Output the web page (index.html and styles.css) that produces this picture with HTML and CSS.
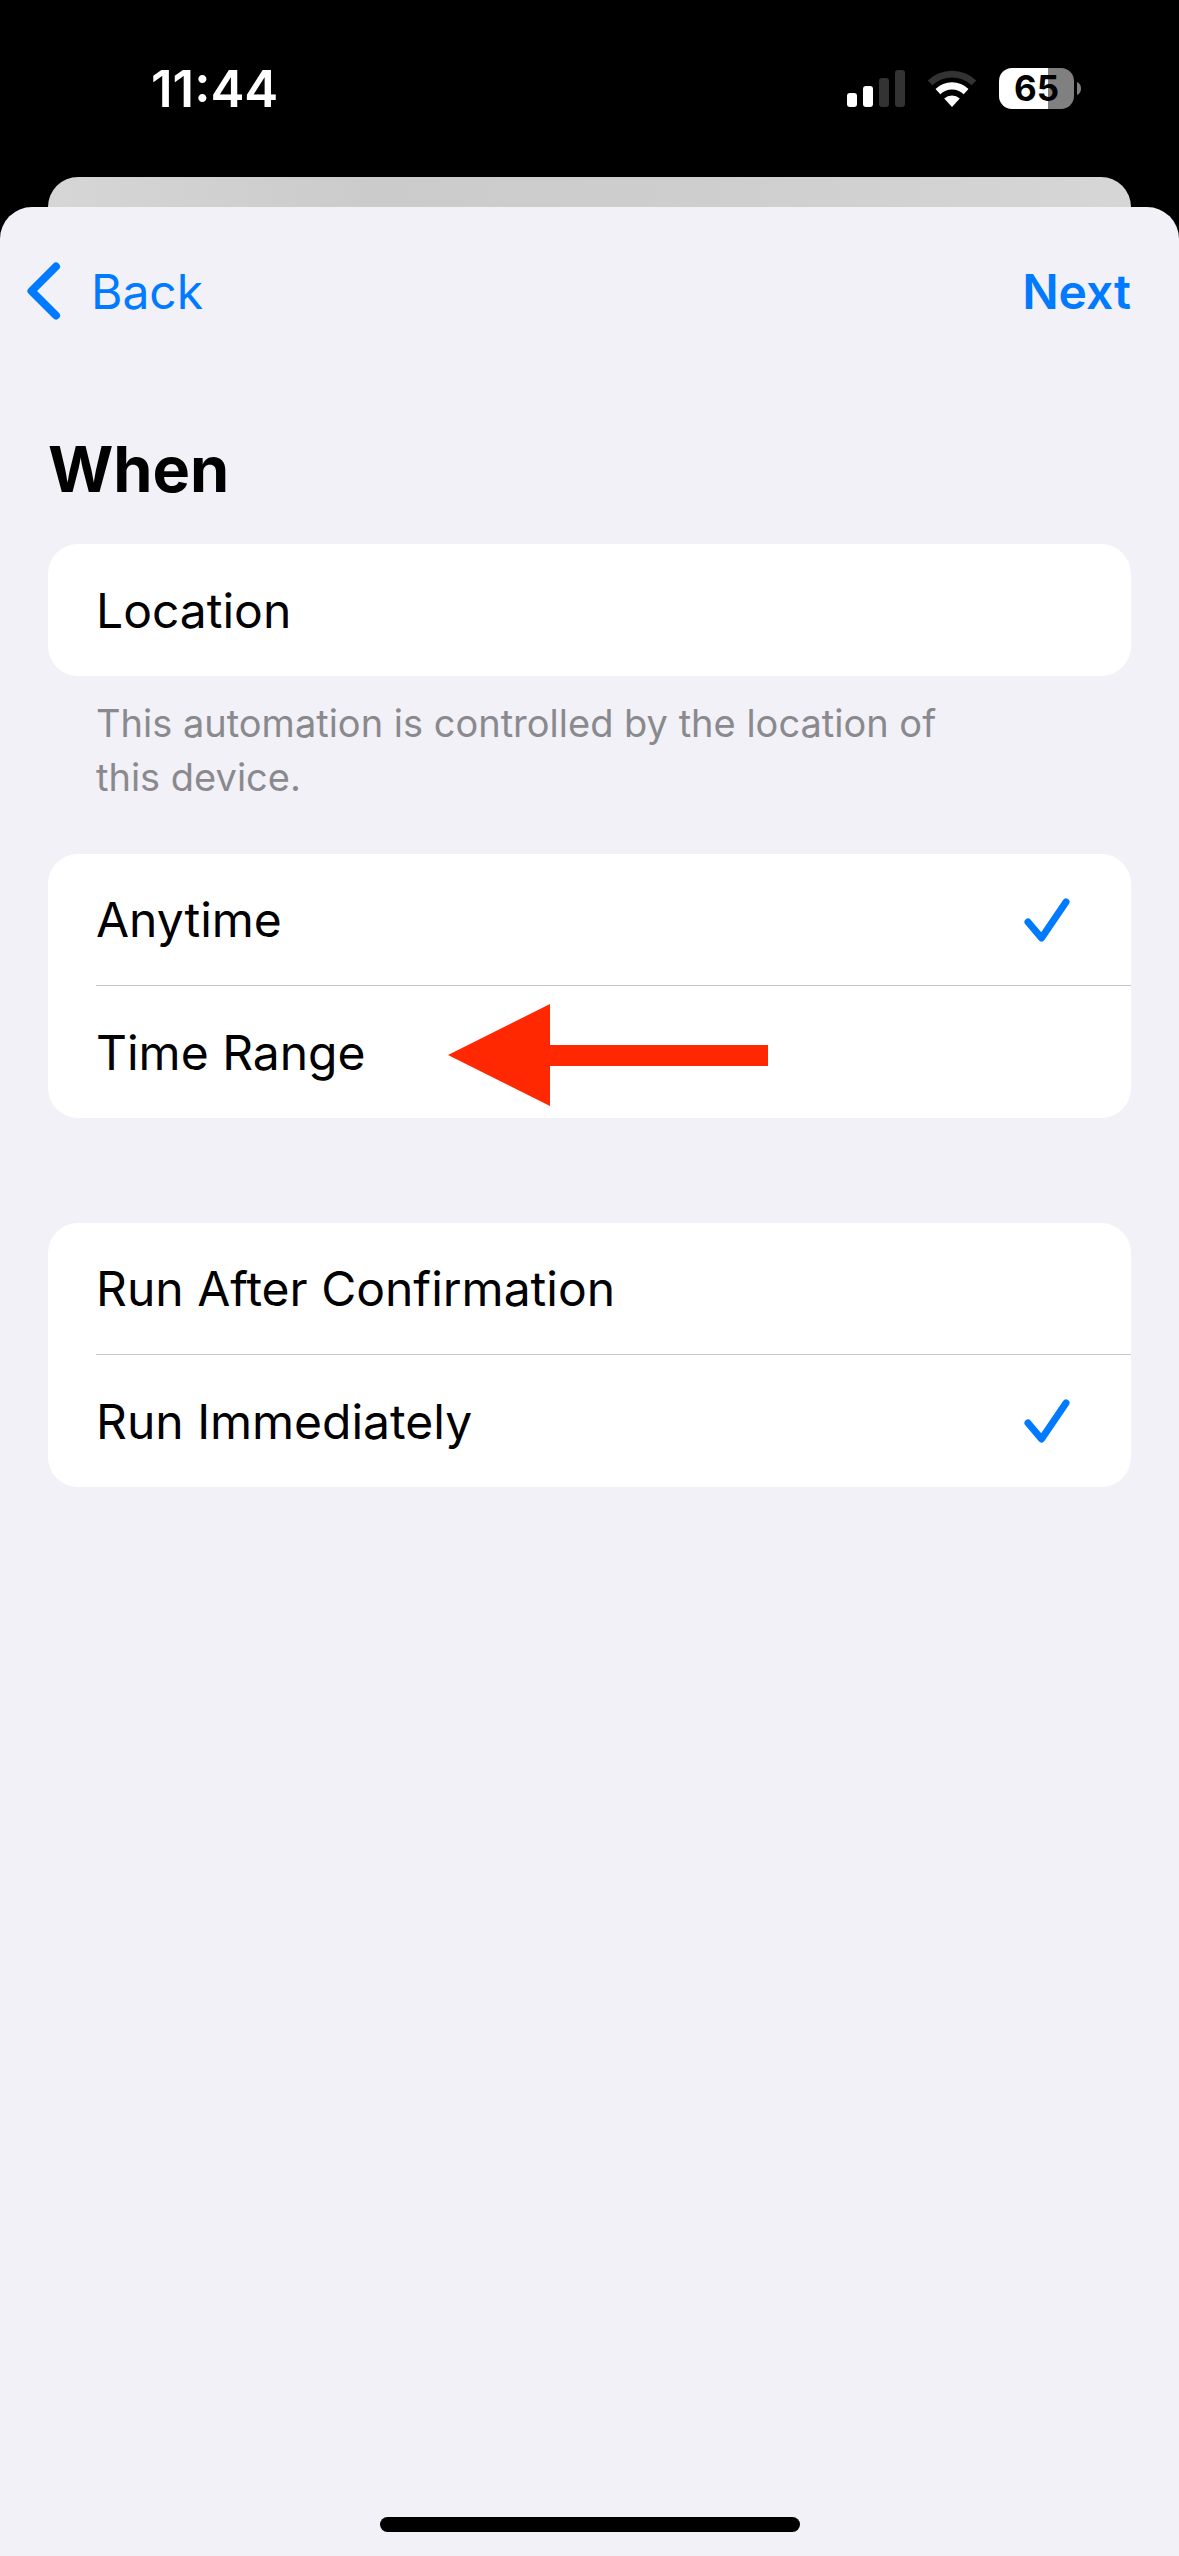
FILE: index.html
```html
<!DOCTYPE html>
<html lang="en">
<head>
    <meta charset="UTF-8">
    <meta name="viewport" content="width=device-width, initial-scale=1.0">
    <title>When</title>
    <link rel="stylesheet" href="styles.css">
</head>
<body>
    <div class="screen">
        <header class="status-bar">
            <time class="clock">11:44</time>
            <div class="status-icons">
                <svg class="signal" width="58" height="37" viewBox="0 0 58 37" fill="#fff" aria-hidden="true">
                    <rect x="0" y="23" width="10" height="14" rx="3"/>
                    <rect x="16" y="16" width="10" height="21" rx="3"/>
                    <rect x="32" y="8" width="10" height="29" rx="3" fill="#333"/>
                    <rect x="48" y="0" width="10" height="37" rx="3" fill="#333"/>
                </svg>
                <svg class="wifi" width="50" height="37" viewBox="0 0 50 37" aria-hidden="true">
                    <path d="M0.7 10.5A35 35 0 0 1 49.3 10.5L44.6 15.2A28.5 28.5 0 0 0 5.4 15.2Z" fill="#333"/>
                    <path d="M8.5 19A23.5 23.5 0 0 1 41.5 19L36.7 24.2A16.8 16.8 0 0 0 13.3 24.2Z" fill="#fff"/>
                    <path d="M17.2 28.5A11.5 11.5 0 0 1 32.8 28.5L25 37Z" fill="#fff"/>
                </svg>
                <div class="battery">
                    <span class="battery-level">65</span>
                    <svg width="4" height="13" viewBox="0 0 4 13" fill="#808080" aria-hidden="true">
                        <path d="M0 0C2.500 1 4 3.500 4 6.500S2.500 12 0 13Z"/>
                    </svg>
                </div>
            </div>
        </header>

        <div class="sheet-behind"></div>

        <main class="sheet">
            <nav class="nav-bar">
                <button type="button" class="back">
                    <svg width="34" height="58" viewBox="0 0 34 58" fill="none" stroke="#007aff" stroke-width="8" stroke-linecap="round" stroke-linejoin="round" aria-hidden="true">
                        <path d="M29 4.500L4.500 29L29 53.500"/>
                    </svg>
                    Back
                </button>
                <button type="button" class="next">Next</button>
            </nav>

            <h1>When</h1>

            <section class="group">
                <div class="row">Location</div>
            </section>
            <p class="note">This automation is controlled by the location of this device.</p>

            <form>
                <section class="group">
                    <label class="row">
                        <input type="radio" name="time" checked>
                        <span>Anytime</span>
                        <svg class="check" width="46" height="44" viewBox="0 0 46 44" aria-hidden="true">
                            <path d="M4 24L17.500 40L42 4"/>
                        </svg>
                    </label>
                    <label class="row">
                        <input type="radio" name="time">
                        <span>Time Range</span>
                        <svg class="check" width="46" height="44" viewBox="0 0 46 44" aria-hidden="true">
                            <path d="M4 24L17.500 40L42 4"/>
                        </svg>
                        <svg class="arrow" width="320" height="102" viewBox="0 0 320 102" fill="#ff2800" aria-hidden="true">
                            <path d="M0 51L102 0V41H320V62H102V102Z"/>
                        </svg>
                    </label>
                </section>

                <section class="group run-group">
                    <label class="row">
                        <input type="radio" name="run">
                        <span>Run After Confirmation</span>
                        <svg class="check" width="46" height="44" viewBox="0 0 46 44" aria-hidden="true">
                            <path d="M4 24L17.500 40L42 4"/>
                        </svg>
                    </label>
                    <label class="row">
                        <input type="radio" name="run" checked>
                        <span>Run Immediately</span>
                        <svg class="check" width="46" height="44" viewBox="0 0 46 44" aria-hidden="true">
                            <path d="M4 24L17.500 40L42 4"/>
                        </svg>
                    </label>
                </section>
            </form>

            <div class="home-indicator"></div>
        </main>
    </div>
</body>
</html>
```

FILE: styles.css
```css
* {
    box-sizing: border-box;
}

body {
    margin: 0;
    background: #000;
    color: #000;
    font-family: Inter, "Liberation Sans", sans-serif;
    font-size: 48px;
}

.screen {
    min-height: 100vh;
    display: flex;
    flex-direction: column;
}

/* status bar */
.status-bar {
    height: 177px;
    padding: 0 98px 0 151px;
    display: flex;
    justify-content: space-between;
    align-items: center;
    color: #fff;
}

.clock {
    font-size: 51px;
    font-weight: 600;
}

.status-icons {
    display: flex;
    align-items: center;
    gap: 22px;
}

.battery {
    display: flex;
    align-items: center;
    gap: 3px;
}

.battery-level {
    width: 75px;
    border-radius: 13px;
    background: linear-gradient(to right, #fff 65%, #808080 65%);
    color: #000;
    font-size: 35px;
    font-weight: 700;
    line-height: 41px;
    text-align: center;
}

/* sheets */
.sheet-behind {
    height: 30px;
    margin: 0 48px;
    border-radius: 30px 30px 0 0;
    background: linear-gradient(to right, #d6d6d6, #cbcbcb 30%, #cecece 60%, #d6d6d6);
}

.sheet {
    flex: 1;
    display: flex;
    flex-direction: column;
    padding: 0 48px 24px;
    border-radius: 32px 32px 0 0;
    background: #f2f1f7;
}

.nav-bar {
    height: 168px;
    margin-left: -21px;
    display: flex;
    justify-content: space-between;
    align-items: center;
}

button {
    padding: 0;
    border: none;
    background: none;
    color: #007aff;
    font: inherit;
    cursor: pointer;
}

.back {
    display: flex;
    align-items: center;
    gap: 30px;
}

.next {
    font-weight: 600;
}

h1 {
    margin: 54px 0 35px;
    font-size: 63px;
    font-weight: 700;
    line-height: 80px;
}

/* lists */
.group {
    border-radius: 30px;
    background: #fff;
    overflow: hidden;
}

.row {
    position: relative;
    height: 132px;
    margin-left: 48px;
    padding-right: 61px;
    display: flex;
    justify-content: space-between;
    align-items: center;
}

.row:not(:last-child) {
    border-bottom: 1px solid #c6c6c8;
}

.row input {
    position: absolute;
    inset: 0;
    width: 100%;
    height: 100%;
    margin: 0;
    opacity: 0;
    cursor: pointer;
}

.check {
    fill: none;
    stroke: #007aff;
    stroke-width: 7px;
    stroke-linecap: round;
    stroke-linejoin: round;
    visibility: hidden;
}

input:checked ~ .check {
    visibility: visible;
}

.arrow {
    position: absolute;
    left: 352px;
    top: 18px;
    pointer-events: none;
}

.note {
    max-width: 960px;
    margin: 20px 0 50px;
    padding: 0 48px;
    color: #8a8a8e;
    font-size: 38px;
    line-height: 54px;
}

.run-group {
    margin-top: 105px;
}

.home-indicator {
    width: 420px;
    height: 15px;
    margin: auto auto 0;
    border-radius: 8px;
    background: #000;
}
```
